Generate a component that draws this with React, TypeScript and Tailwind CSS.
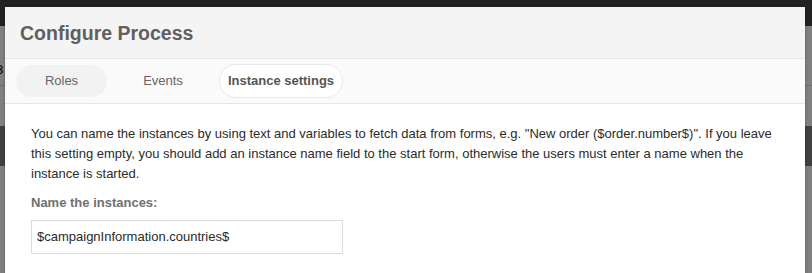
import React from 'react';

export default function App() {
  return (
    <div className="relative w-[812px] h-[273px] overflow-hidden bg-[#808080] font-['Liberation_Sans',Arial,sans-serif]">
      {/* page behind the dialog */}
      <div className="flex flex-col">
        <div className="h-[26px] bg-[#212223]" />
        <div className="h-[60px] border-b border-[#6e6e6e] bg-[#808080] text-[13px] text-black pt-[36px] leading-[16px]">
          <span className="-ml-[4px]">3</span>
        </div>
        <div className="h-[40px] bg-[#808080]" />
        <div className="h-[40px] bg-[#404040]" />
        <div className="h-[120px] bg-[#808080]" />
      </div>

      {/* dialog */}
      <div className="absolute left-[5px] top-[7px] w-[800px] h-[300px] bg-white shadow-[0_0_3px_rgba(0,0,0,0.3)]">
        <div className="h-[52px] bg-[#f4f4f4] border-b border-[#e6e6e6] flex items-center px-[15px] pt-[2px]">
          <h1 className="text-[19.5px] font-bold text-[#5f5f61]">Configure Process</h1>
        </div>
        <div className="h-[45px] bg-[#fafafa] border-b border-[#e6e6e6] flex items-center px-[11px] text-[13px] text-[#666]">
          <button type="button" className="w-[91px] h-[32px] rounded-full bg-[#f2f2f2]">Roles</button>
          <button type="button" className="w-[112px] h-[32px] rounded-full">Events</button>
          <button type="button" className="w-[124px] h-[34px] rounded-full bg-white border border-[#e8e8e8] font-bold text-[#555]">Instance settings</button>
        </div>
        <div className="px-[26px] pt-[20px]">
          <p className="text-[13px] leading-[20px] text-[#2b2b2b]">
            You can name the instances by using text and variables to fetch data from forms, e.g. "New order ($order.number$)". If you leave this setting empty, you should add an instance name field to the start form, otherwise the users must enter a name when the instance is started.
          </p>
          <label className="block mt-[9px] text-[13px] font-bold text-[#707070]">Name the instances:</label>
          <input
            type="text"
            defaultValue="$campaignInformation.countries$"
            className="mt-[7px] w-[312px] h-[34px] border border-[#dcdcdc] px-[5px] text-[13px] text-[#2b2b2b] outline-none"
          />
        </div>
      </div>
    </div>
  );
}
